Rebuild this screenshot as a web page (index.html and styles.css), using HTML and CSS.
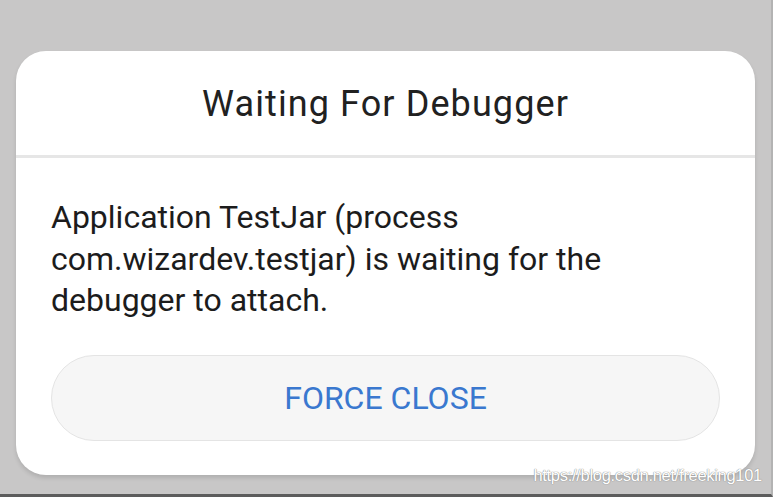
FILE: index.html
```html
<!DOCTYPE html>
<html>
<head>
<meta charset="utf-8">
<link rel="stylesheet" href="styles.css">
</head>
<body>
<div class="screen">
  <div class="dialog">
    <div class="title">Waiting For Debugger</div>
    <div class="divider"></div>
    <div class="message">Application TestJar (process com.wizardev.testjar) is waiting for the debugger to attach.</div>
    <div class="actions">
      <div class="button">FORCE CLOSE</div>
    </div>
  </div>
  <div class="watermark">https://blog.csdn.net/freeking101</div>
</div>
</body>
</html>
```
FILE: styles.css
```css
html, body {
  margin: 0;
  padding: 0;
}
body {
  width: 773px;
  height: 497px;
  overflow: hidden;
  background: #c8c7c7;
  font-family: Roboto, "Noto Sans", sans-serif;
}
.screen {
  position: relative;
  border-right: 2px solid #b3b3b3;
  border-bottom: 3px solid #5c5c5c;
  padding: 51px 0 0 16px;
  box-sizing: border-box;
  height: 497px;
  width: 773px;
}
.dialog {
  width: 739px;
  height: 424px;
  background: #ffffff;
  border-radius: 30px;
  box-shadow: 0 3px 4px rgba(0,0,0,0.12);
  display: flex;
  flex-direction: column;
}
.title {
  height: 104px;
  display: flex;
  align-items: center;
  justify-content: center;
  font-size: 36px;
  letter-spacing: 1.1px;
  color: #212121;
  padding-top: 2px;
  box-sizing: border-box;
}
.divider {
  height: 3px;
  background: #e6e6e6;
}
.message {
  padding: 39px 60px 0 35px;
  font-size: 32px;
  line-height: 41.5px;
  color: #1c1c1c;
}
.actions {
  padding: 33px 35px 0 35px;
}
.button {
  width: 669px;
  height: 86px;
  box-sizing: border-box;
  border: 1.5px solid #e4e4e4;
  border-radius: 43px;
  background: #f6f6f6;
  display: flex;
  align-items: center;
  justify-content: center;
  font-size: 32px;
  color: #3a78cf;
}
.watermark {
  position: absolute;
  right: 9px;
  top: 466px;
  font-family: "Liberation Sans", Arial, sans-serif;
  font-size: 16.5px;
  color: #ffffff;
  text-shadow: 0 0 1px #8a8a8a, 0 0 1px #8a8a8a;
  letter-spacing: -0.3px;
}
```
